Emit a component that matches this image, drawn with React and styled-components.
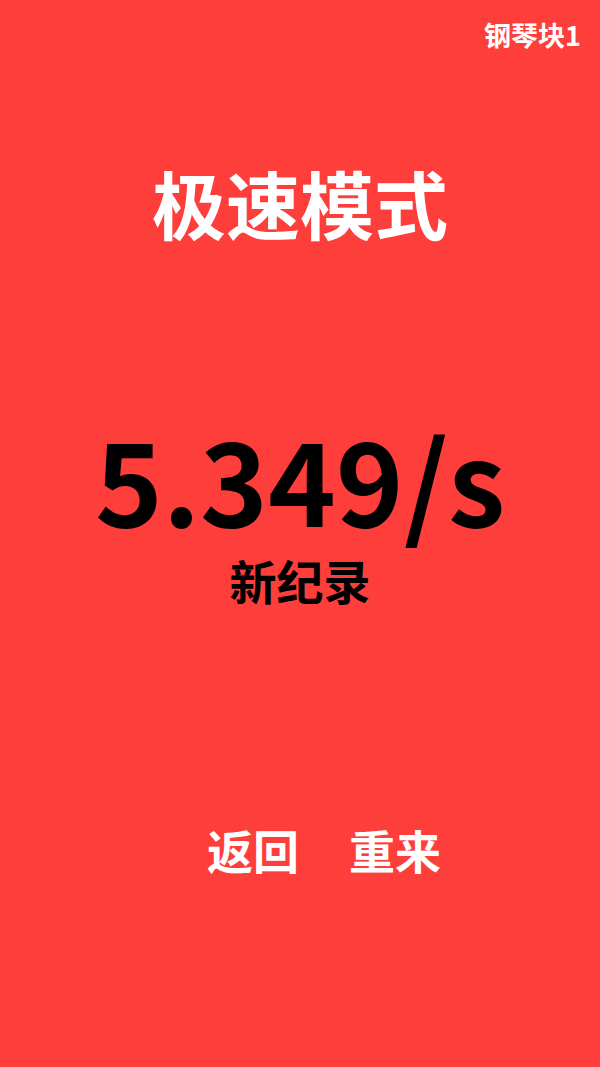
import React from "react"
import styled, { createGlobalStyle } from "styled-components"

const GlobalStyle = createGlobalStyle`
  html, body {
    margin: 0;
    padding: 0;
    background: #fe3e3b;
  }
  body {
    font-family: "Noto Sans CJK SC", "Noto Sans", sans-serif;
  }
`

const Screen = styled.div`
  box-sizing: border-box;
  width: 600px;
  height: 1067px;
  background-color: #fe3e3b;
  display: flex;
  flex-direction: column;
  align-items: center;
  overflow: hidden;
`

const TopBar = styled.div`
  align-self: stretch;
  display: flex;
  justify-content: flex-end;
  padding: 15px 19px 0 0;
  height: 50px;
  box-sizing: border-box;
`

const Badge = styled.span`
  color: #fff;
  font-size: 27px;
  font-weight: 700;
  line-height: 40px;
`

const Title = styled.h1`
  margin: 112px 0 0;
  color: #fff;
  font-size: 74px;
  font-weight: 700;
  line-height: 80px;
`

const Score = styled.div`
  margin-top: 178px;
  color: #000;
  font-size: 115px;
  font-weight: 700;
  line-height: 115px;
`

const Record = styled.div`
  margin-top: 20px;
  color: #000;
  font-size: 47px;
  font-weight: 700;
  line-height: 50px;
`

const Actions = styled.div`
  margin-top: 214px;
  padding-left: 48px;
  display: flex;
  gap: 50px;
`

const ActionBtn = styled.button`
  background: none;
  border: none;
  padding: 0;
  color: #fff;
  font-family: inherit;
  font-size: 46px;
  font-weight: 700;
  line-height: 60px;
  cursor: pointer;
`

export default function App() {
  return (
    <>
      <GlobalStyle />
      <Screen>
        <TopBar>
          <Badge>钢琴块1</Badge>
        </TopBar>
        <Title>极速模式</Title>
        <Score>5.349/s</Score>
        <Record>新纪录</Record>
        <Actions>
          <ActionBtn type="button">返回</ActionBtn>
          <ActionBtn type="button">重来</ActionBtn>
        </Actions>
      </Screen>
    </>
  )
}
